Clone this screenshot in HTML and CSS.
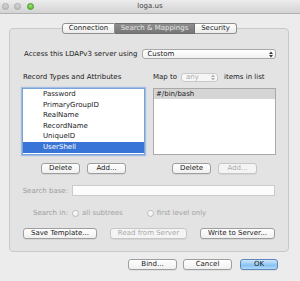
FILE: index.html
```html
<!DOCTYPE html>
<html lang="en">
<head>
    <meta charset="UTF-8">
    <meta name="viewport" content="width=device-width, initial-scale=1.0">
    <title>loga.us</title>
    <link rel="stylesheet" href="styles.css">
</head>
<body>
    <div class="window">
        <div class="titlebar">
            <div class="lights">
                <span class="light"></span>
                <span class="light"></span>
                <span class="light green"></span>
            </div>
            <div class="title">loga.us</div>
            <div></div>
        </div>

        <div class="content">
            <div class="tabs">
                <div class="tab tab-conn">Connection</div>
                <div class="tab tab-search active">Search &amp; Mappings</div>
                <div class="tab tab-sec">Security</div>
            </div>

            <div class="group">
                <div class="access-row">
                    <span class="access-label">Access this LDAPv3 server using</span>
                    <div class="popup popup-custom">
                        <span>Custom</span>
                        <svg class="arrows" width="4" height="7" viewBox="0 0 4 7"><path d="M0 3 L2 0.5 L4 3 Z M0 4 L2 6.5 L4 4 Z"/></svg>
                    </div>
                </div>

                <div class="columns">
                    <div class="column">
                        <div class="col-head">Record Types and Attributes</div>
                        <div class="list list-focus">
                            <div class="row">Password</div>
                            <div class="row">PrimaryGroupID</div>
                            <div class="row">RealName</div>
                            <div class="row">RecordName</div>
                            <div class="row">UniqueID</div>
                            <div class="row selected">UserShell</div>
                        </div>
                        <div class="btn-pair">
                            <button class="btn">Delete</button>
                            <button class="btn">Add...</button>
                        </div>
                    </div>

                    <div class="column">
                        <div class="col-head map-head">
                            <span>Map to</span>
                            <div class="popup popup-any">
                                <span>any</span>
                                <svg class="arrows" width="4" height="7" viewBox="0 0 4 7"><path d="M0 3 L2 0.5 L4 3 Z M0 4 L2 6.5 L4 4 Z"/></svg>
                            </div>
                            <span>items in list</span>
                        </div>
                        <div class="list">
                            <div class="value-row">#/bin/bash</div>
                        </div>
                        <div class="btn-pair">
                            <button class="btn">Delete</button>
                            <button class="btn" disabled>Add...</button>
                        </div>
                    </div>
                </div>

                <div class="field-row">
                    <span class="side-label">Search base:</span>
                    <div class="textfield"></div>
                </div>

                <div class="radio-row">
                    <span class="side-label">Search in:</span>
                    <span class="radio"></span>
                    <span>all subtrees</span>
                    <span class="radio radio-second"></span>
                    <span>first level only</span>
                </div>

                <div class="action-row">
                    <button class="btn btn-save">Save Template...</button>
                    <button class="btn btn-read" disabled>Read from Server</button>
                    <button class="btn btn-write">Write to Server...</button>
                </div>
            </div>

            <div class="dialog-buttons">
                <button class="btn btn-bind">Bind...</button>
                <button class="btn btn-cancel">Cancel</button>
                <button class="btn btn-ok">OK</button>
            </div>
        </div>
    </div>
</body>
</html>
```

FILE: styles.css
```css
* {
    margin: 0;
    padding: 0;
    box-sizing: border-box;
}

body {
    font-family: "DejaVu Sans", "Lucida Grande", sans-serif;
    font-size: 7px;
    color: #1a1a1a;
    background: #ececec;
    white-space: nowrap;
}

.window {
    width: 300px;
    height: 281px;
    background: #ececec;
    overflow: hidden;
}

.titlebar {
    height: 14px;
    display: grid;
    grid-template-columns: 1fr auto 1fr;
    align-items: center;
    background: linear-gradient(#ececec, #d3d3d3);
    border-bottom: 1px solid #b1b1b1;
}

.lights {
    display: flex;
    gap: 5px;
    padding-left: 2px;
}

.light {
    width: 7px;
    height: 7px;
    border-radius: 50%;
    background: linear-gradient(#d6d6d6, #bdbdbd);
    border: 1px solid #a9a9a9;
}

.light.green {
    margin-left: 1px;
    background: radial-gradient(circle at 50% 35%, #a6e27c, #5fbd3a 70%);
    border-color: #4b9a2c;
}

.title {
    color: #444;
    padding-bottom: 1px;
}

.content {
    padding: 9px 11px 0 9px;
}

/* tabs sit over the group box border */
.tabs {
    display: flex;
    justify-content: center;
    margin-bottom: -6px;
    position: relative;
    z-index: 1;
    padding-left: 1px;
}

.tab {
    height: 11px;
    line-height: 9px;
    text-align: center;
    border: 1px solid #8f8f8f;
    border-left: none;
    background: linear-gradient(#ffffff, #ebebeb);
    color: #1a1a1a;
}

.tab-conn {
    width: 53px;
    border-left: 1px solid #8f8f8f;
    border-radius: 3px 0 0 3px;
}

.tab-search {
    width: 80px;
}

.tab-sec {
    width: 42px;
    border-radius: 0 3px 3px 0;
}

.tab.active {
    background: linear-gradient(#8e8e8e, #767676);
    color: #e6e6e6;
    border-color: #6f6f6f;
}

.group {
    height: 224px;
    border: 1px solid #c9c9c9;
    border-radius: 4px;
    background: #e3e3e3;
    padding: 20px 12px 0 12px;
    display: flex;
    flex-direction: column;
}

.access-row {
    height: 10px;
    display: flex;
    align-items: center;
    gap: 5px;
}

.access-label {
    margin-left: 2px;
}

.popup {
    display: flex;
    align-items: center;
    justify-content: space-between;
    border: 1px solid #a8a8a8;
    border-radius: 3px;
    background: linear-gradient(#ffffff, #f1f1f1);
    padding: 0 2px 0 4px;
}

.popup-custom {
    flex: 1;
    height: 10px;
}

.arrows {
    fill: #3a3a3a;
}

.popup-any {
    width: 37px;
    height: 9px;
    color: #a9a9a9;
    border-color: #c8c8c8;
    background: #f6f6f6;
}

.popup-any .arrows {
    fill: #b0b0b0;
}

.columns {
    margin-top: 13px;
    display: grid;
    grid-template-columns: 123px 123px;
    column-gap: 8px;
}

.col-head {
    height: 10px;
    display: flex;
    align-items: center;
    padding-left: 1px;
}

.map-head {
    padding-left: 0;
    gap: 4px;
}

.map-head .popup {
    margin-right: 2px;
}

.list {
    margin-top: 6px;
    height: 67px;
    background: #fff;
    border: 1px solid #a9a9a9;
}

.list-focus {
    border-color: #7aa3d6;
    box-shadow: 0 0 1px 1px rgba(110, 160, 225, 0.55);
}

.row {
    height: 10.6px;
    line-height: 10.6px;
    padding-left: 20px;
}

.row.selected {
    background: #3875d7;
    color: #fff;
}

.value-row {
    height: 10px;
    line-height: 10px;
    padding-left: 2px;
    background: #d5d5d5;
}

.btn-pair {
    margin-top: 8px;
    display: flex;
    justify-content: center;
    gap: 7px;
}

.btn-pair .btn {
    width: 39px;
}

.btn {
    height: 11px;
    font: inherit;
    line-height: 9px;
    color: #1a1a1a;
    border: 1px solid #9e9e9e;
    border-radius: 3px;
    background: linear-gradient(#ffffff, #f0f0f0);
    box-shadow: 0 1px 0 rgba(0, 0, 0, 0.06);
}

.btn:disabled {
    color: #aaaaaa;
    border-color: #c6c6c6;
    background: #f4f4f4;
}

.field-row {
    margin-top: 11px;
    height: 11px;
    display: flex;
    align-items: center;
    gap: 4px;
}

.side-label {
    width: 46px;
    text-align: right;
    color: #9c9c9c;
}

.textfield {
    flex: 1;
    height: 11px;
    margin-right: 1px;
    background: #fcfcfc;
    border: 1px solid #cbcbcb;
}

.radio-row {
    margin-top: 12px;
    height: 10px;
    display: flex;
    align-items: center;
    gap: 3px;
    color: #a2a2a2;
}

.radio-row .side-label {
    margin-right: 1px;
}

.radio {
    width: 7px;
    height: 7px;
    border-radius: 50%;
    border: 1px solid #bdbdbd;
    background: linear-gradient(#ffffff, #ededed);
}

.radio-second {
    margin-left: 21px;
}

.action-row {
    margin-top: 10px;
    height: 11px;
    display: flex;
    justify-content: space-between;
    padding: 0 1px;
}

.btn-save {
    width: 74px;
}

.btn-read {
    width: 77px;
}

.btn-write {
    width: 75px;
}

.dialog-buttons {
    margin-top: 7px;
    display: flex;
    justify-content: flex-end;
    gap: 6px;
    padding-right: 11px;
}

.btn-bind,
.btn-cancel {
    width: 49px;
}

.btn-ok {
    width: 38px;
    margin-left: 2px;
    border-color: #5c86bd;
    background: linear-gradient(#cfe6fa, #94c9f4 50%, #7dbdf2 51%, #b4daf8);
}
```
